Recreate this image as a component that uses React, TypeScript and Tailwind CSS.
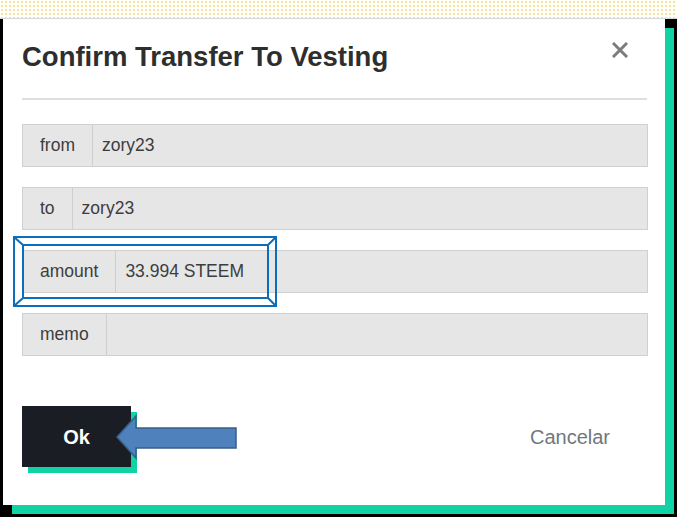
import React from 'react';

const fields = [
  { label: 'from', value: 'zory23' },
  { label: 'to', value: 'zory23' },
  { label: 'amount', value: '33.994 STEEM' },
  { label: 'memo', value: '' },
];

const Field = ({ label, value }: { label: string; value: string }) => (
  <div className="flex h-[43px] items-stretch border border-[#d0d0d0] bg-[#e6e6e6] text-[17.5px] text-[#3d3d3d]">
    <div className="flex items-center border-r border-[#cfcfcf] px-[17px]">{label}</div>
    <div className="flex items-center pl-[9px]">{value}</div>
  </div>
);

const App: React.FC = () => {
  return (
    <div className="relative h-[517px] w-[677px] overflow-hidden bg-black font-['Liberation_Sans',Arial,sans-serif]">
      {/* dotted strip at top */}
      <div className="h-[19px] border-b border-[#d9d9d9] bg-[#fffef8] bg-[radial-gradient(circle,#f4e4a4_1px,transparent_1.3px)] bg-[length:4px_4px]" />

      <div className="pl-[3px]">
        <div className="flex h-[486px] w-[662px] flex-col bg-white px-[19px] shadow-[9px_9px_0_#0fd3a4]">
          <div className="flex items-start justify-between pt-[22px]">
            <h2 className="text-[27.5px] font-bold leading-[32px] text-[#2e2e2e]">Confirm Transfer To Vesting</h2>
            <svg width="16" height="16" viewBox="0 0 16 16" className="mr-[18px] mt-[1px]">
              <path d="M2 2 L14 14 M14 2 L2 14" stroke="#7c7c7c" strokeWidth="3" strokeLinecap="square" />
            </svg>
          </div>
          <div className="mt-[25px] h-[2px] w-[625px] bg-[#dedede]" />

          <div className="mt-[24px] flex w-[626px] flex-col gap-[20px]">
            {fields.map((f) => (
              <Field key={f.label} label={f.label} value={f.value} />
            ))}
          </div>

          <div className="mt-[50px] flex items-center justify-between pr-[36px]">
            <button className="h-[61px] w-[109px] bg-[#1a1e24] text-[20px] font-bold text-white shadow-[6px_6px_0_#0fd3a4]">
              Ok
            </button>
            <span className="text-[20px] text-[#6f7880]">Cancelar</span>
          </div>
        </div>
      </div>

      {/* annotation: highlight frame around amount */}
      <svg className="absolute left-[12px] top-[235px]" width="266" height="73" viewBox="0 0 266 73">
        <g fill="none" stroke="#0a6ebd" strokeWidth="2">
          <rect x="2" y="2" width="262" height="69" />
          <rect x="11" y="10" width="245" height="53" />
          <path d="M2 2 L11 10 M264 2 L256 10 M2 71 L11 63 M264 71 L256 63" />
        </g>
      </svg>

      {/* annotation: arrow pointing to Ok */}
      <svg className="absolute left-[115px] top-[412px]" width="124" height="50" viewBox="0 0 124 50">
        <path
          d="M2 25 L21 4 L21 16 L121 16 L121 36 L21 36 L21 46 Z"
          fill="#4f81bd"
          stroke="#385d8a"
          strokeWidth="1.5"
          strokeLinejoin="miter"
        />
      </svg>
    </div>
  );
};

export default App;
